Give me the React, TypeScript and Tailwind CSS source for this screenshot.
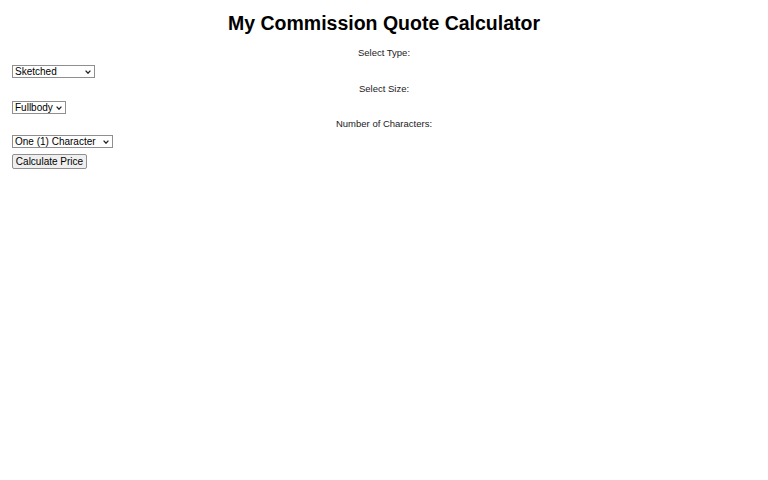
import { useState } from 'react';

const typeOptions = ['Sketched', 'Lineart', 'Flat Colored', 'Shaded'];
const sizeOptions = ['Headshot', 'Halfbody', 'Fullbody'];
const characterOptions = ['One (1) Character', 'Two (2) Characters', 'Three (3) Characters'];

function Chevron() {
  return (
    <svg
      className="pointer-events-none absolute right-[4px] top-1/2 h-[4px] w-[6px] -translate-y-1/2"
      viewBox="0 0 6 4"
      fill="none"
      stroke="#222"
      strokeWidth="1.3"
    >
      <polyline points="0.6,0.6 3,3.2 5.4,0.6" />
    </svg>
  );
}

type DropdownProps = {
  value: string;
  options: string[];
  onChange: (v: string) => void;
  className: string;
};

function Dropdown({ value, options, onChange, className }: DropdownProps) {
  return (
    <div className={`relative ${className}`}>
      <select
        value={value}
        onChange={(e) => onChange(e.target.value)}
        className="block h-[13px] w-full appearance-none border border-[#8f8f8f] bg-white pl-[2px] text-[10px] leading-[11px] text-black"
      >
        {options.map((o) => (
          <option key={o}>{o}</option>
        ))}
      </select>
      <Chevron />
    </div>
  );
}

export default function App() {
  const [type, setType] = useState('Sketched');
  const [size, setSize] = useState('Fullbody');
  const [characters, setCharacters] = useState('One (1) Character');

  return (
    <div className="min-h-screen bg-white px-3 pt-[10px] text-black font-['Liberation_Sans',Arial,sans-serif]">
      <h1 className="text-center text-[19.5px] font-bold leading-[26px]">My Commission Quote Calculator</h1>

      <label className="mt-[11px] block text-center text-[9.5px] leading-[12px] text-[#1a1a1a]">Select Type:</label>
      <Dropdown value={type} options={typeOptions} onChange={setType} className="mt-[6px] w-[83px]" />

      <label className="mt-[5px] block text-center text-[9.5px] leading-[12px] text-[#1a1a1a]">Select Size:</label>
      <Dropdown value={size} options={sizeOptions} onChange={setSize} className="mt-[6px] w-[54px]" />

      <label className="mt-[4px] block text-center text-[9.5px] leading-[12px] text-[#1a1a1a]">Number of Characters:</label>
      <Dropdown
        value={characters}
        options={characterOptions}
        onChange={setCharacters}
        className="mt-[5px] w-[101px]"
      />

      <button className="mt-[6px] block h-[15px] w-[75px] rounded-[2px] border border-[#8f8f8f] bg-[#efefef] text-[10px] leading-[12px]">
        Calculate Price
      </button>
    </div>
  );
}
